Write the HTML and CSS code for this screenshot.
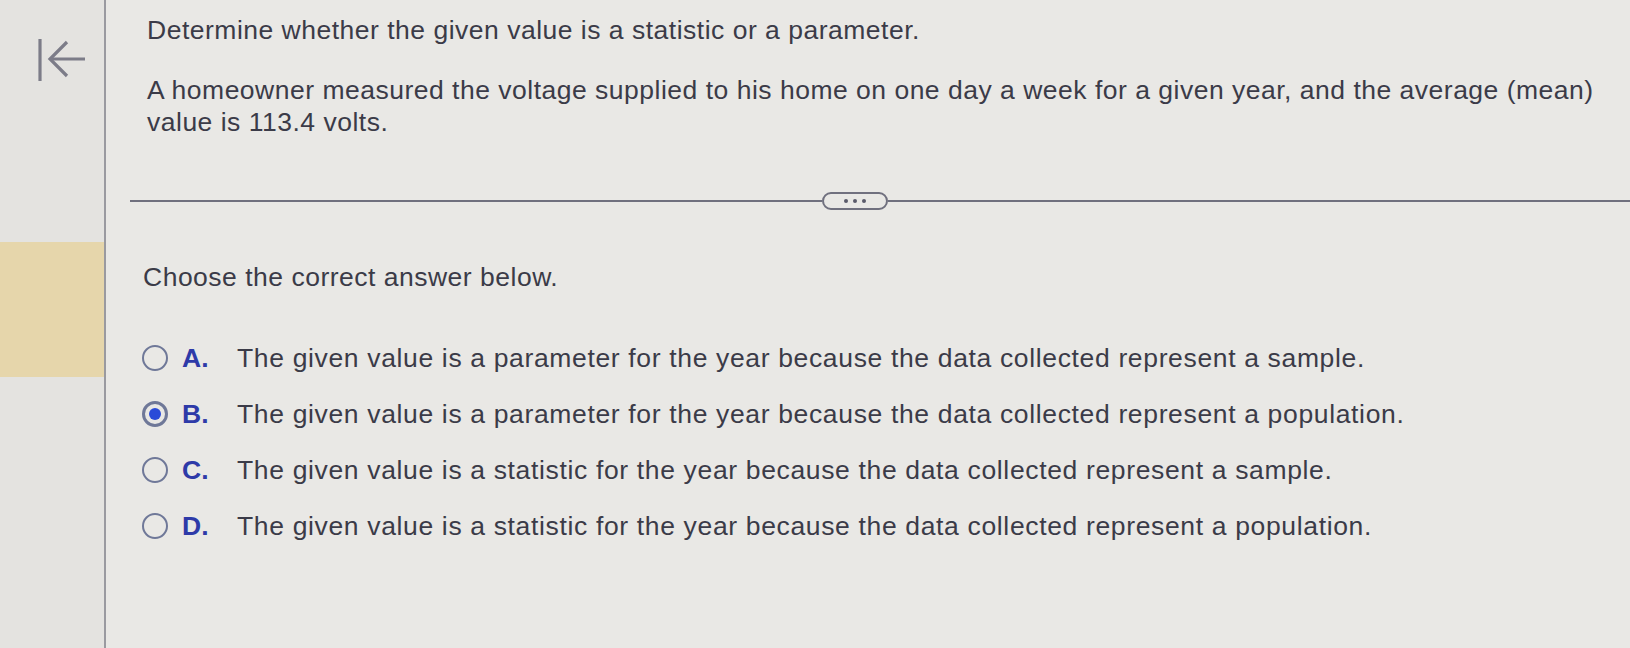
FILE: index.html
```html
<!DOCTYPE html>
<html>
<head>
<meta charset="utf-8">
<link rel="stylesheet" href="styles.css">
</head>
<body>
<div class="page">
  <aside class="sidebar">
    <div class="collapse">
      <svg width="52" height="46" viewBox="0 0 52 46">
        <line x1="4" y1="2" x2="4" y2="44" stroke="#7c7c88" stroke-width="3.2"/>
        <line x1="14" y1="22" x2="49" y2="22" stroke="#7c7c88" stroke-width="3.2"/>
        <polyline points="31,5 14,22 31,39" fill="none" stroke="#7c7c88" stroke-width="3.2"/>
      </svg>
    </div>
    <div class="marker"></div>
  </aside>
  <main class="main">
    <p class="title">Determine whether the given value is a statistic or a parameter.</p>
    <p class="question">A homeowner measured the voltage supplied to his home on one day a week for a given year, and the average (mean) value is 113.4 volts.</p>
    <div class="divider">
      <span class="rule left"></span>
      <span class="more"><i></i><i></i><i></i></span>
      <span class="rule right"></span>
    </div>
    <p class="prompt">Choose the correct answer below.</p>
    <ul class="options">
      <li class="option"><span class="radio"></span><span class="letter">A.</span><span class="text">The given value is a parameter for the year because the data collected represent a sample.</span></li>
      <li class="option"><span class="radio checked"></span><span class="letter">B.</span><span class="text">The given value is a parameter for the year because the data collected represent a population.</span></li>
      <li class="option"><span class="radio"></span><span class="letter">C.</span><span class="text">The given value is a statistic for the year because the data collected represent a sample.</span></li>
      <li class="option"><span class="radio"></span><span class="letter">D.</span><span class="text">The given value is a statistic for the year because the data collected represent a population.</span></li>
    </ul>
  </main>
</div>
</body>
</html>
```

FILE: styles.css
```css
html, body {
  margin: 0;
  padding: 0;
}
body {
  width: 1630px;
  height: 648px;
  overflow: hidden;
  background: #e9e8e5;
  font-family: "Liberation Sans", Arial, sans-serif;
  color: #3b3b48;
}
.page {
  display: flex;
  height: 648px;
}
.sidebar {
  width: 104px;
  flex: none;
  background: #e4e3e0;
  border-right: 2px solid #9a9aa0;
  display: flex;
  flex-direction: column;
}
.collapse {
  padding: 37px 0 0 36px;
  height: 242px;
  box-sizing: border-box;
}
.collapse svg {
  display: block;
}
.marker {
  height: 135px;
  background: #e6d6ab;
}
.main {
  flex: 1;
  padding: 14px 0 0 41px;
  min-width: 0;
}
p {
  margin: 0;
}
.title,
.question,
.prompt {
  font-size: 26.5px;
  line-height: 32px;
  letter-spacing: 0.5px;
}
.question {
  margin-top: 28px;
  padding-right: 20px;
}
.divider {
  display: flex;
  align-items: center;
  margin: 55px 0 0 -17px;
  height: 16px;
}
.rule {
  height: 2px;
  background: #70707e;
}
.rule.left {
  flex: 692;
}
.rule.right {
  flex: 742;
}
.more {
  flex: none;
  width: 62px;
  height: 14px;
  border: 2px solid #70707e;
  border-radius: 9px;
  display: flex;
  align-items: center;
  justify-content: center;
  gap: 5px;
}
.more i {
  width: 4px;
  height: 4px;
  border-radius: 50%;
  background: #5a5a6a;
}
.prompt {
  margin-top: 52px;
  margin-left: -4px;
}
.options {
  list-style: none;
  margin: 37px 0 0 -5px;
  padding: 0;
}
.option {
  display: flex;
  align-items: center;
  height: 56px;
  font-size: 26.5px;
}
.radio {
  box-sizing: border-box;
  width: 26px;
  height: 26px;
  border: 2px solid #6f7898;
  border-radius: 50%;
  flex: none;
  display: flex;
  align-items: center;
  justify-content: center;
  margin-right: 14px;
}
.radio.checked {
  border-width: 3px;
}
.radio.checked::after {
  content: "";
  width: 12px;
  height: 12px;
  border-radius: 50%;
  background: #2a4ad8;
}
.letter {
  color: #2e3aa8;
  font-weight: bold;
  width: 55px;
  flex: none;
}
.text {
  white-space: nowrap;
  letter-spacing: 0.65px;
}
```
